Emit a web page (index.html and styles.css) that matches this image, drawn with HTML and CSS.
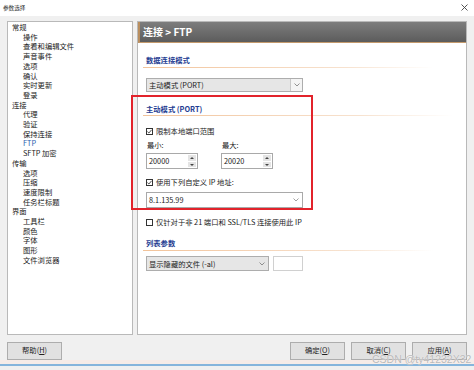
FILE: index.html
```html
<!DOCTYPE html>
<html lang="zh-CN">
<head>
    <meta charset="UTF-8">
    <title>参数选择</title>
    <link rel="stylesheet" href="styles.css">
</head>
<body>
    <div class="titlebar">
        <span class="title">参数选择</span>
        <svg class="close" width="7" height="7" viewBox="0 0 7 7"><path d="M0.5 0.5 L6.5 6.5 M6.5 0.5 L0.5 6.5" stroke="#444" stroke-width="0.9"/></svg>
    </div>

    <div class="main">
        <ul class="tree">
            <li>常规</li>
            <li class="sub">操作</li>
            <li class="sub">查看和编辑文件</li>
            <li class="sub">声音事件</li>
            <li class="sub">选项</li>
            <li class="sub">确认</li>
            <li class="sub">实时更新</li>
            <li class="sub">登录</li>
            <li>连接</li>
            <li class="sub">代理</li>
            <li class="sub">验证</li>
            <li class="sub">保持连接</li>
            <li class="sub active">FTP</li>
            <li class="sub">SFTP 加密</li>
            <li>传输</li>
            <li class="sub">选项</li>
            <li class="sub">压缩</li>
            <li class="sub">速度限制</li>
            <li class="sub">任务栏标题</li>
            <li>界面</li>
            <li class="sub">工具栏</li>
            <li class="sub">颜色</li>
            <li class="sub">字体</li>
            <li class="sub">图形</li>
            <li class="sub">文件浏览器</li>
        </ul>

        <div class="panel">
            <div class="panel-head">连接 &gt; FTP</div>
            <div class="panel-body">
                <div class="section-title first">数据连接模式</div>
                <div class="rule"></div>
                <div class="combo wide">
                    <span class="combo-text">主动模式 (PORT)</span>
                    <span class="combo-btn">
                        <svg width="6" height="4" viewBox="0 0 6 4"><path d="M0.5 0.5 L3 3 L5.5 0.5" fill="none" stroke="#777" stroke-width="0.8"/></svg>
                    </span>
                </div>

                <div class="section-title">主动模式 (PORT)</div>
                <div class="rule short"></div>
                <label class="check row-check1">
                    <span class="box checked"><svg width="5" height="5" viewBox="0 0 5 5"><path d="M0.4 2.6 L1.9 4 L4.6 0.8" fill="none" stroke="#222" stroke-width="0.8"/></svg></span>
                    限制本地端口范围
                </label>
                <div class="range">
                    <span class="range-label">最小:</span>
                    <span class="range-label">最大:</span>
                    <div class="spin">
                        <span class="spin-val">20000</span>
                        <span class="spin-btns">
                            <span class="spin-up"></span>
                            <span class="spin-down"></span>
                        </span>
                    </div>
                    <div class="spin">
                        <span class="spin-val">20020</span>
                        <span class="spin-btns">
                            <span class="spin-up"></span>
                            <span class="spin-down"></span>
                        </span>
                    </div>
                </div>
                <label class="check row-check2">
                    <span class="box checked"><svg width="5" height="5" viewBox="0 0 5 5"><path d="M0.4 2.6 L1.9 4 L4.6 0.8" fill="none" stroke="#222" stroke-width="0.8"/></svg></span>
                    使用下列自定义 IP 地址:
                </label>
                <div class="ip-input">
                    <span>8.1.135.99</span>
                    <svg width="6" height="4" viewBox="0 0 6 4"><path d="M0.5 0.5 L3 3 L5.5 0.5" fill="none" stroke="#888" stroke-width="0.8"/></svg>
                </div>
                <label class="check row-check3">
                    <span class="box"></span>
                    仅针对于非 21 端口和 SSL/TLS 连接使用此 IP
                </label>

                <div class="section-title third">列表参数</div>
                <div class="rule"></div>
                <div class="list-row">
                    <div class="combo list-combo">
                        <span class="combo-text">显示隐藏的文件 (-al)</span>
                        <svg width="6" height="4" viewBox="0 0 6 4"><path d="M0.5 0.5 L3 3 L5.5 0.5" fill="none" stroke="#777" stroke-width="0.8"/></svg>
                    </div>
                    <div class="small-input"></div>
                </div>
            </div>
        </div>
    </div>

    <div class="footer">
        <button class="btn">帮助(<u>H</u>)</button>
        <div class="btn-group">
            <button class="btn">确定(<u>O</u>)</button>
            <button class="btn">取消(<u>C</u>)</button>
            <button class="btn">应用(<u>A</u>)</button>
        </div>
    </div>
    <div class="frame-bottom"></div>

    <!-- annotation + watermark sit over the dialog -->
    <div class="highlight"></div>
    <div class="watermark">CSDN @ty41232X32</div>
</body>
</html>
```

FILE: styles.css
```css
body {
    margin: 0;
    width: 474px;
    height: 370px;
    overflow: hidden;
    position: relative;
    background: #f0f0f0;
    font-family: "Noto Sans CJK SC", "Noto Sans", sans-serif;
    font-size: 7.3px;
    color: #222;
}
.titlebar {
    height: 16px;
    background: #fff;
    display: flex;
    align-items: center;
    justify-content: space-between;
    padding: 0 6px 1px 3px;
    box-sizing: border-box;
}
.title {
    font-size: 5.6px;
    color: #333;
}
.main {
    display: flex;
    gap: 4px;
    padding: 5px 7px 0 7px;
}
.tree {
    list-style: none;
    margin: 0;
    padding: 1px 0 0 4px;
    width: 126px;
    height: 314px;
    box-sizing: border-box;
    background: #fff;
    border: 1px solid #b9b9b9;
    line-height: 9.7px;
}
.tree .sub {
    padding-left: 11px;
}
.tree .active {
    color: #2c5eae;
}
.panel {
    width: 330px;
    height: 314px;
    box-sizing: border-box;
    background: #fff;
    border: 1px solid #b9b9b9;
}
.panel-head {
    height: 21px;
    box-sizing: border-box;
    background: linear-gradient(#7d7d7d, #5c5c5c);
    border-left: 2px solid #b98e5f;
    border-bottom: 1px solid #c49a6c;
    color: #fff;
    font-weight: bold;
    font-size: 10px;
    line-height: 20px;
    padding-left: 3px;
}
.panel-body {
    padding-left: 8px;
}
.section-title {
    color: #1f3d92;
    font-weight: bold;
    line-height: 10px;
    margin-top: 12px;
}
.section-title.third {
    margin-top: 11px;
}
.rule {
    height: 1px;
    width: 290px;
    margin-left: -3px;
    margin-top: 2px;
    background: linear-gradient(to right, #f2c39a, #f7e2cf 70%, #fff);
}
.rule.short {
    margin-top: 1px;
    width: 310px;
}
.combo {
    display: flex;
    align-items: center;
    box-sizing: border-box;
    border: 1px solid #adadad;
    background: #e6e6e6;
}
.combo.wide {
    width: 157px;
    height: 14px;
    margin-top: 10px;
}
.combo-text {
    flex: 1;
    padding-left: 2px;
}
.combo-btn {
    width: 11px;
    height: 100%;
    background: #f4f4f4;
    border-left: 1px solid #c8c8c8;
    display: flex;
    align-items: center;
    justify-content: center;
}
.check {
    display: flex;
    align-items: center;
    gap: 3px;
    line-height: 10px;
}
.box {
    width: 7px;
    height: 7px;
    box-sizing: border-box;
    border: 1px solid #333;
    background: #fff;
    display: flex;
    align-items: center;
    justify-content: center;
}
.row-check1 {
    margin-top: 10px;
}
.row-check2 {
    margin-top: 8px;
}
.row-check3 {
    margin-top: 9px;
}
.range {
    display: grid;
    grid-template-columns: 52px 52px;
    column-gap: 23px;
    margin-top: 4px;
}
.range-label {
    line-height: 10px;
    margin-bottom: 3px;
    padding-left: 1px;
}
.spin {
    height: 16px;
    box-sizing: border-box;
    border: 1px solid #a9a9a9;
    background: #fff;
    display: flex;
    align-items: center;
    justify-content: space-between;
    padding: 1px;
}
.spin-val {
    padding-left: 1px;
}
.spin-btns {
    width: 8px;
    height: 100%;
    display: flex;
    flex-direction: column;
    gap: 1px;
}
.spin-up,
.spin-down {
    flex: 1;
    background: #e4e4e4;
    position: relative;
}
.spin-up::after,
.spin-down::after {
    content: "";
    position: absolute;
    left: 2px;
    border-left: 2px solid transparent;
    border-right: 2px solid transparent;
}
.spin-up::after {
    top: 2px;
    border-bottom: 2px solid #444;
}
.spin-down::after {
    top: 2px;
    border-top: 2px solid #444;
}
.ip-input {
    width: 157px;
    height: 16px;
    margin-top: 5px;
    box-sizing: border-box;
    border: 1px solid #a9a9a9;
    display: flex;
    align-items: center;
    justify-content: space-between;
    padding: 0 3px 0 2px;
}
.list-row {
    display: flex;
    gap: 4px;
    margin-top: 5px;
}
.list-combo {
    width: 123px;
    height: 15px;
    padding-right: 3px;
}
.small-input {
    width: 30px;
    height: 15px;
    box-sizing: border-box;
    border: 1px solid #d0d0d0;
}
.footer {
    display: flex;
    justify-content: space-between;
    padding: 7px 7px 0 7px;
}
.btn-group {
    display: flex;
    gap: 6px;
}
.btn {
    width: 55px;
    height: 18px;
    margin: 0;
    padding: 0 0 2px 0;
    border: 1px solid #adadad;
    background: #e1e1e1;
    font-family: inherit;
    font-size: 7.3px;
    line-height: 9px;
    color: #222;
}
.frame-bottom {
    margin-top: 0;
    height: 4px;
    background: #f6ece8;
    border-bottom: 2px solid #86b5dc;
}
.highlight {
    position: absolute;
    left: 131px;
    top: 95px;
    width: 182px;
    height: 115px;
    box-sizing: border-box;
    border: 2px solid #e2232b;
}
.watermark {
    position: absolute;
    left: 372px;
    top: 353px;
    white-space: nowrap;
    font-family: "Liberation Sans", Arial, sans-serif;
    font-size: 10.5px;
    line-height: 12px;
    color: #b9b9b9;
    text-shadow: 0 0 1px #fff;
}
```
